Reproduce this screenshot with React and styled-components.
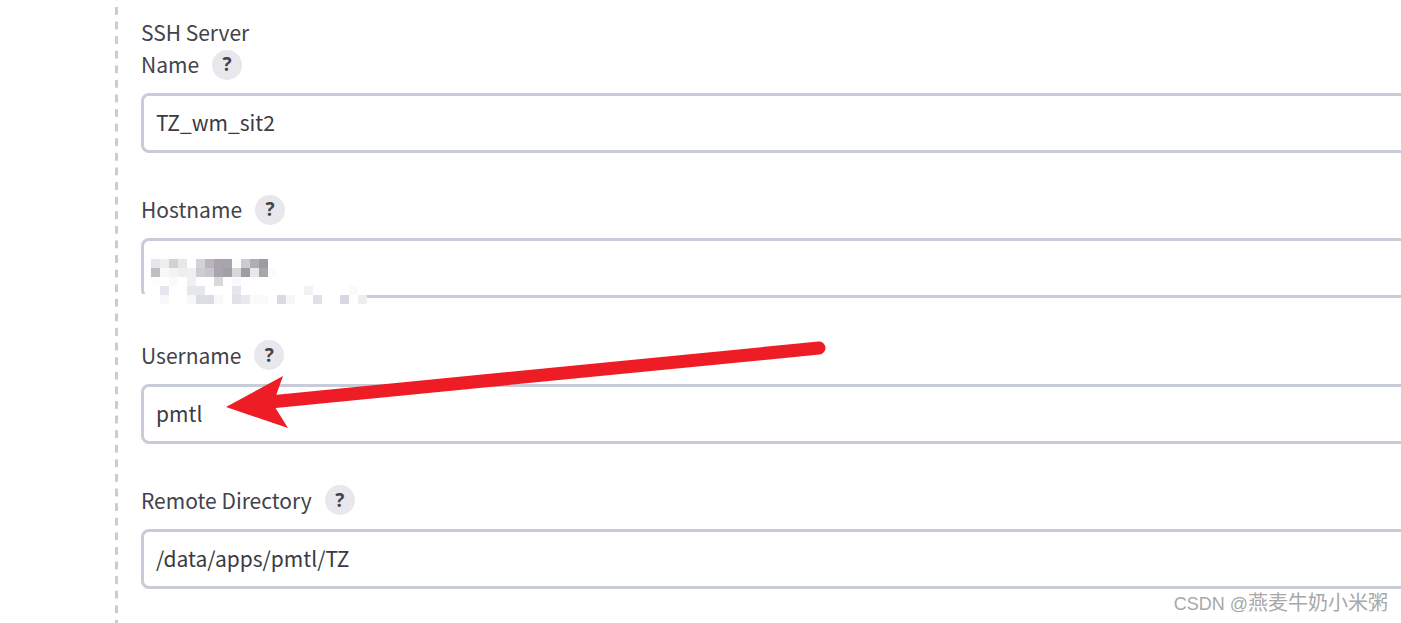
import React from "react";
import styled, { createGlobalStyle } from "styled-components";

const Global = createGlobalStyle`
  html, body { margin: 0; padding: 0; background: #fff; }
  body { width: 1401px; height: 623px; overflow: hidden; }
`;

const Page = styled.div`
  position: relative;
  width: 1401px;
  height: 623px;
  overflow: hidden;
  background: #fff;
  padding-left: 115px;
  box-sizing: border-box;
  font-family: "Noto Sans CJK SC", "Noto Sans", sans-serif;
  color: #3a3a44;
`;

const Section = styled.div`
  height: 623px;
  width: 1400px;
  box-sizing: border-box;
  background: linear-gradient(#c9cadb 55%, transparent 55%) 0 7px / 3px 14.6px repeat-y;
  padding: 16px 0 0 26px;
  display: flex;
  flex-direction: column;
  gap: 40.33px;
`;

const Field = styled.div`
  display: flex;
  flex-direction: column;
  gap: 13px;
`;

const Label = styled.div`
  font-size: 21px;
  line-height: 32px;
  width: ${(p) => p.$width || "auto"};
  color: #42424c;
`;

const LabelText = styled.span`
  margin-right: 13px;
`;

const Help = styled.span`
  display: inline-flex;
  align-items: center;
  justify-content: center;
  vertical-align: 2px;
  width: 30px;
  height: 30px;
  margin-top: -4px;
  border-radius: 50%;
  background: #e8e8ec;
  color: #44444e;
  font-family: "Noto Sans", sans-serif;
  font-size: 19px;
  font-weight: 700;
  line-height: 1;
`;

const Input = styled.div`
  box-sizing: border-box;
  height: 60px;
  width: 1300px;
  border: 3px solid #c8cbd8;
  border-radius: 8px;
  padding: 0 12px 2px;
  display: flex;
  align-items: center;
  font-size: 21px;
  color: #3a3a44;
  background: #fff;
`;

const Mosaic = styled.svg`
  position: absolute;
  left: 142px;
  top: 250px;
`;

const Arrow = styled.svg`
  position: absolute;
  left: 0;
  top: 0;
  pointer-events: none;
`;

const Watermark = styled.div`
  position: absolute;
  right: 13px;
  top: 590px;
  font-family: "Liberation Sans", "Noto Sans CJK SC", sans-serif;
  font-size: 18px;
  line-height: 26px;
  color: #a8a8a8;
  white-space: nowrap;
`;

const WatermarkName = styled.span`
  font-size: 20px;
`;

const cells = [
  [1, 1, "#e6e6ea"], [2, 1, "#eeeeee"], [3, 1, "#d2d2d6"], [4, 1, "#e8e8e8"], [6, 1, "#d4d2d8"], [7, 1, "#b8b6bc"], [8, 1, "#a8a6ac"], [9, 1, "#a8a6ac"], [10, 1, "#fcfcfc"], [11, 1, "#cccccf"], [12, 1, "#b0aeb3"], [13, 1, "#9e9ca2"],
  [1, 2, "#c0bec4"], [2, 2, "#f8f8f8"], [3, 2, "#f4f4f4"], [4, 2, "#eeeeee"], [5, 2, "#f0f0f0"], [6, 2, "#ccccd2"], [7, 2, "#c8c6cc"], [8, 2, "#a8a6ac"], [9, 2, "#a0a0a6"], [10, 2, "#d8d8d8"], [11, 2, "#9e9ca4"], [12, 2, "#e8e8e8"], [13, 2, "#a8a6ac"], [14, 2, "#fcfcfc"],
  [1, 3, "#fdfdfd"], [3, 3, "#fafafa"], [5, 3, "#f0f0f4"], [8, 3, "#d9d8dc"], [10, 3, "#fafafa"],
  [2, 4, "#e6e6ee"], [5, 4, "#e6e6ee"], [6, 4, "#e6e6ee"], [10, 4, "#e6e6ee"], [18, 4, "#f2f2f2"], [23, 4, "#fafafa"],
  [2, 5, "#f8f8f8"], [5, 5, "#f8f8f8"], [6, 5, "#dcdce4"], [7, 5, "#dcdce4"], [8, 5, "#f8f8f8"], [10, 5, "#e0e2e8"], [11, 5, "#e8e8ee"], [12, 5, "#fafafa"], [13, 5, "#fafafa"], [15, 5, "#d8dae4"], [16, 5, "#f6f6f6"], [19, 5, "#dfe1e8"], [22, 5, "#d8d8e4"], [24, 5, "#eeeeee"],
];

const fields = [
  { label: "SSH Server Name", value: "TZ_wm_sit2", width: "130px" },
  { label: "Hostname", value: "" },
  { label: "Username", value: "pmtl" },
  { label: "Remote Directory", value: "/data/apps/pmtl/TZ" },
];

export default function App() {
  return (
    <Page>
      <Global />
      <Section>
        {fields.map((f) => (
          <Field key={f.label}>
            <Label $width={f.width}>
              <LabelText>{f.label}</LabelText>
              <Help>?</Help>
            </Label>
            <Input>{f.value}</Input>
          </Field>
        ))}
      </Section>
      <Mosaic width="230" height="54" viewBox="0 0 230 54">
        <rect x="3" y="36" width="219" height="18" fill="#fff" />
        <rect x="0" y="44" width="222" height="10" fill="#fff" />
        {cells.map(([c, r, fill]) => (
          <rect key={`${c}-${r}`} x={c * 9} y={r * 9} width="9" height="9" fill={fill} />
        ))}
      </Mosaic>
      <Arrow width="1401" height="623" viewBox="0 0 1401 623">
        <path d="M819 348 L270 402" stroke="#ee1c25" strokeWidth="13" strokeLinecap="round" fill="none" />
        <path d="M226 407 L283 376 L273 404 L288 428 Z" fill="#ee1c25" />
      </Arrow>
      <Watermark>
        CSDN @<WatermarkName>燕麦牛奶小米粥</WatermarkName>
      </Watermark>
    </Page>
  );
}
